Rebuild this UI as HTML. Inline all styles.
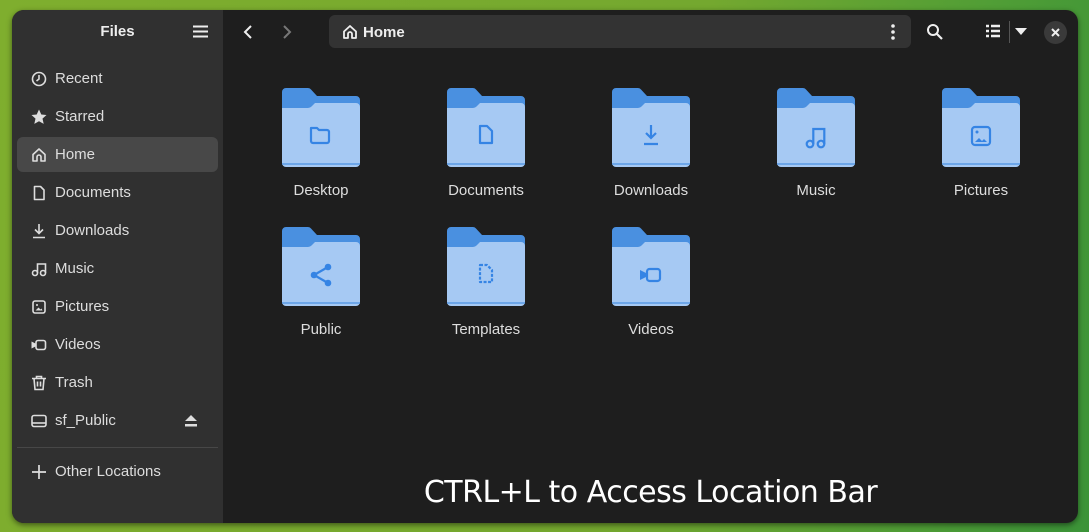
<!DOCTYPE html>
<html><head><meta charset="utf-8"><style>
*{margin:0;padding:0;box-sizing:border-box}
body{width:1089px;height:532px;overflow:hidden;background:linear-gradient(100deg,#7fae2e 0%,#74a82f 60%,#4f9d36 85%,#3b9338 100%);font-family:"Liberation Sans","DejaVu Sans",sans-serif;position:relative}
.win{position:absolute;left:12px;top:10px;width:1066px;height:513px;border-radius:12px;overflow:hidden;background:#1e1e1e;box-shadow:0 2px 6px rgba(0,0,0,.5)}
.side{position:absolute;left:0;top:0;width:211px;height:100%;background:#303030}
.title{position:absolute;left:0;width:211px;top:13px;text-align:center;color:#eee;font-weight:bold;font-size:15px}
.row{position:absolute;left:5px;width:201px;height:35px;border-radius:6px;color:#ddd;font-size:15px}
.row.sel{background:#484848}
.row svg{position:absolute;left:14px;top:10px}
.row span{position:absolute;left:38px;top:9px}
.lbar{position:absolute;left:317px;top:5px;width:582px;height:33px;border-radius:6px;background:#333}
.lab{position:absolute;width:140px;text-align:center;color:#ddd;font-size:15px}
.msg{position:absolute;left:211px;width:855px;top:465px;text-align:center;color:#fff;font-size:30px;font-family:"DejaVu Sans","Liberation Sans",sans-serif;letter-spacing:-0.5px}
</style></head><body>
<div class="win">
<div class="side">
<div class="title">Files</div>
<svg style="position:absolute;left:181px;top:15px" width="15" height="13"><path d="M0 1.5h15M0 6.5h15M0 11.5h15" stroke="#eee" stroke-width="2"/></svg>
<div class="row" style="top:51px"><svg width="16" height="16"><circle cx="8" cy="8" r="6.5" fill="none" stroke="#ddd" stroke-width="1.6"/><path d="M8 4v4l-2.5 2" stroke="#ddd" stroke-width="1.6" fill="none"/></svg><span>Recent</span></div>
<div class="row" style="top:89px"><svg width="16" height="16"><path d="M8 0.5l2.3 5 5.2.5-4 3.6 1.2 5.3L8 12.2 3.3 14.9l1.2-5.3-4-3.6 5.2-.5z" fill="#ddd"/></svg><span>Starred</span></div>
<div class="row sel" style="top:127px"><svg width="16" height="16"><path d="M2 7.5L8 2l6 5.5V14h-4v-4a2 2 0 0 0-4 0v4H2z" fill="none" stroke="#ddd" stroke-width="1.6" stroke-linejoin="round"/></svg><span>Home</span></div>
<div class="row" style="top:165px"><svg width="16" height="16"><path d="M3.5 1.5h6l3.5 3.5v9.5h-9.5z" fill="none" stroke="#ddd" stroke-width="1.6" stroke-linejoin="round"/></svg><span>Documents</span></div>
<div class="row" style="top:203px"><svg width="16" height="16"><path d="M8 1v9M4 6.5l4 4 4-4M2 14.5h12" fill="none" stroke="#ddd" stroke-width="1.6"/></svg><span>Downloads</span></div>
<div class="row" style="top:241px"><svg width="16" height="16"><circle cx="4" cy="12" r="2.5" fill="none" stroke="#ddd" stroke-width="1.6"/><circle cx="12" cy="12" r="2.5" fill="none" stroke="#ddd" stroke-width="1.6"/><path d="M6.5 12V3h8v9" fill="none" stroke="#ddd" stroke-width="1.6"/></svg><span>Music</span></div>
<div class="row" style="top:279px"><svg width="16" height="16"><rect x="2" y="2" width="12" height="12" rx="2" fill="none" stroke="#ddd" stroke-width="1.6"/><path d="M4.5 11.5l3-3 2 2 1-1 1 2z" fill="#ddd"/><circle cx="6" cy="6" r="1" fill="#ddd"/></svg><span>Pictures</span></div>
<div class="row" style="top:317px"><svg width="16" height="16"><rect x="5" y="3.5" width="9.5" height="9" rx="2" fill="none" stroke="#ddd" stroke-width="1.6"/><path d="M0.5 4.5v7l4-2v-3z" fill="#ddd"/></svg><span>Videos</span></div>
<div class="row" style="top:355px"><svg width="16" height="16"><path d="M1 3.5h14M5.5 3.5V1.5h5v2M3 3.5l1 11h8l1-11M6.5 6.5v5M9.5 6.5v5" fill="none" stroke="#ddd" stroke-width="1.6"/></svg><span>Trash</span></div>
<div class="row" style="top:393px"><svg width="16" height="16"><rect x="1" y="2.5" width="14" height="11" rx="2" fill="none" stroke="#ddd" stroke-width="1.6"/><path d="M1 10h14" stroke="#ddd" stroke-width="1.6"/></svg><span>sf_Public</span><svg style="left:167px;top:11px" width="14" height="13"><path d="M7 1l6 6H1z M1 10h12v2.5H1z" fill="#ddd"/></svg></div>
<div style="position:absolute;left:5px;width:201px;top:437px;height:1px;background:#474747"></div>
<div class="row" style="top:444px"><svg width="16" height="16"><path d="M8 1v14M1 8h14" stroke="#ddd" stroke-width="1.7"/></svg><span>Other Locations</span></div>
</div>
<svg style="position:absolute;left:230px;top:14px" width="12" height="16"><path d="M9 2L3 8l6 6" fill="none" stroke="#eee" stroke-width="2"/></svg>
<svg style="position:absolute;left:269px;top:14px" width="12" height="16"><path d="M3 2l6 6-6 6" fill="none" stroke="#777" stroke-width="2"/></svg>
<div class="lbar">
<svg style="position:absolute;left:13px;top:9px" width="16" height="16"><path d="M2 7.5L8 2l6 5.5V14h-4v-4a2 2 0 0 0-4 0v4H2z" fill="none" stroke="#eee" stroke-width="1.8" stroke-linejoin="round"/></svg>
<span style="position:absolute;left:34px;top:9px;color:#eee;font-weight:bold;font-size:15px">Home</span>
<svg style="position:absolute;left:561px;top:8px" width="6" height="18"><circle cx="3" cy="3" r="1.8" fill="#eee"/><circle cx="3" cy="9" r="1.8" fill="#eee"/><circle cx="3" cy="15" r="1.8" fill="#eee"/></svg>
</div>
<svg style="position:absolute;left:914px;top:13px" width="18" height="18"><circle cx="7" cy="7" r="5" fill="none" stroke="#eee" stroke-width="2"/><path d="M10.5 10.5l5.5 5.5" stroke="#eee" stroke-width="2.2"/></svg>
<svg style="position:absolute;left:973px;top:14px" width="16" height="15"><path d="M1 2h3M1 7h3M1 12h3M6 2h9M6 7h9M6 12h9" stroke="#eee" stroke-width="2.4"/></svg>
<div style="position:absolute;left:997px;top:11px;width:1px;height:22px;background:#555"></div>
<svg style="position:absolute;left:1003px;top:18px" width="12" height="8"><path d="M0 0h12L6 7z" fill="#eee"/></svg>
<div style="position:absolute;left:1032px;top:11px;width:23px;height:23px;border-radius:50%;background:#3a3a3a"></div>
<svg style="position:absolute;left:1039px;top:18px" width="9" height="9"><path d="M1 1l7 7M8 1l-7 7" stroke="#eee" stroke-width="2"/></svg>

<svg width="0" height="0" style="position:absolute"><defs>
<g id="fd"><path d="M4 0h22a4 4 0 0 1 3 1.5L35 8h39a4 4 0 0 1 4 4v20H0V4a4 4 0 0 1 4-4z" fill="#4a90e0"/><path d="M0 20h26a5 5 0 0 0 3.5-1.5L33 15h41a4 4 0 0 1 4 4v56a4 4 0 0 1-4 4H4a4 4 0 0 1-4-4z" fill="#a6c9f3"/><path d="M0 76h78" stroke="#5a9ae4" stroke-width="1.5"/></g>
</defs></svg>
<svg style="position:absolute;left:270px;top:78px" width="78" height="80"><use href="#fd"/><path d="M29 40h6l2 2h8a2 2 0 0 1 2 2v9a2 2 0 0 1-2 2H31a2 2 0 0 1-2-2z" fill="none" stroke="#3584e4" stroke-width="2.2" stroke-linejoin="round"/></svg>
<svg style="position:absolute;left:435px;top:78px" width="78" height="80"><use href="#fd"/><path d="M33 38h7l5 5v12H33z" fill="none" stroke="#3584e4" stroke-width="2.2" stroke-linejoin="round"/></svg>
<svg style="position:absolute;left:600px;top:78px" width="78" height="80"><use href="#fd"/><path d="M39 37v13M34 45l5 5 5-5M32 56h14" fill="none" stroke="#3584e4" stroke-width="2.2"/></svg>
<svg style="position:absolute;left:765px;top:78px" width="78" height="80"><use href="#fd"/><circle cx="33" cy="56" r="3.3" fill="none" stroke="#3584e4" stroke-width="2.2"/><circle cx="44" cy="56" r="3.3" fill="none" stroke="#3584e4" stroke-width="2.2"/><path d="M36.3 56V41h11v15" fill="none" stroke="#3584e4" stroke-width="2.2"/></svg>
<svg style="position:absolute;left:930px;top:78px" width="78" height="80"><use href="#fd"/><rect x="30" y="39" width="18" height="18" rx="3" fill="none" stroke="#3584e4" stroke-width="2.2"/><path d="M33 54l4-4 3 3 2-2 3 3z" fill="#3584e4"/><circle cx="35" cy="44" r="1.5" fill="#3584e4"/></svg>
<svg style="position:absolute;left:270px;top:217px" width="78" height="80"><use href="#fd"/><circle cx="46" cy="40" r="3.3" fill="#3584e4"/><circle cx="32" cy="48" r="3.3" fill="#3584e4"/><circle cx="46" cy="56" r="3.3" fill="#3584e4"/><path d="M46 40L32 48l14 8" fill="none" stroke="#3584e4" stroke-width="2.2"/></svg>
<svg style="position:absolute;left:435px;top:217px" width="78" height="80"><use href="#fd"/><path d="M33 38h7l5 5v12H33z" fill="none" stroke="#3584e4" stroke-width="2.2" stroke-dasharray="3 1.5" stroke-linejoin="round"/></svg>
<svg style="position:absolute;left:600px;top:217px" width="78" height="80"><use href="#fd"/><rect x="35" y="42" width="13" height="12" rx="2.5" fill="none" stroke="#3584e4" stroke-width="2.2"/><path d="M28 43v10l6-3v-4z" fill="#3584e4"/></svg>
<div class="lab" style="left:239px;top:172px">Desktop</div>
<div class="lab" style="left:404px;top:172px">Documents</div>
<div class="lab" style="left:569px;top:172px">Downloads</div>
<div class="lab" style="left:734px;top:172px">Music</div>
<div class="lab" style="left:899px;top:172px">Pictures</div>
<div class="lab" style="left:239px;top:311px">Public</div>
<div class="lab" style="left:404px;top:311px">Templates</div>
<div class="lab" style="left:569px;top:311px">Videos</div>
<div class="msg">CTRL+L to Access Location Bar</div>
</div>
</body></html>
